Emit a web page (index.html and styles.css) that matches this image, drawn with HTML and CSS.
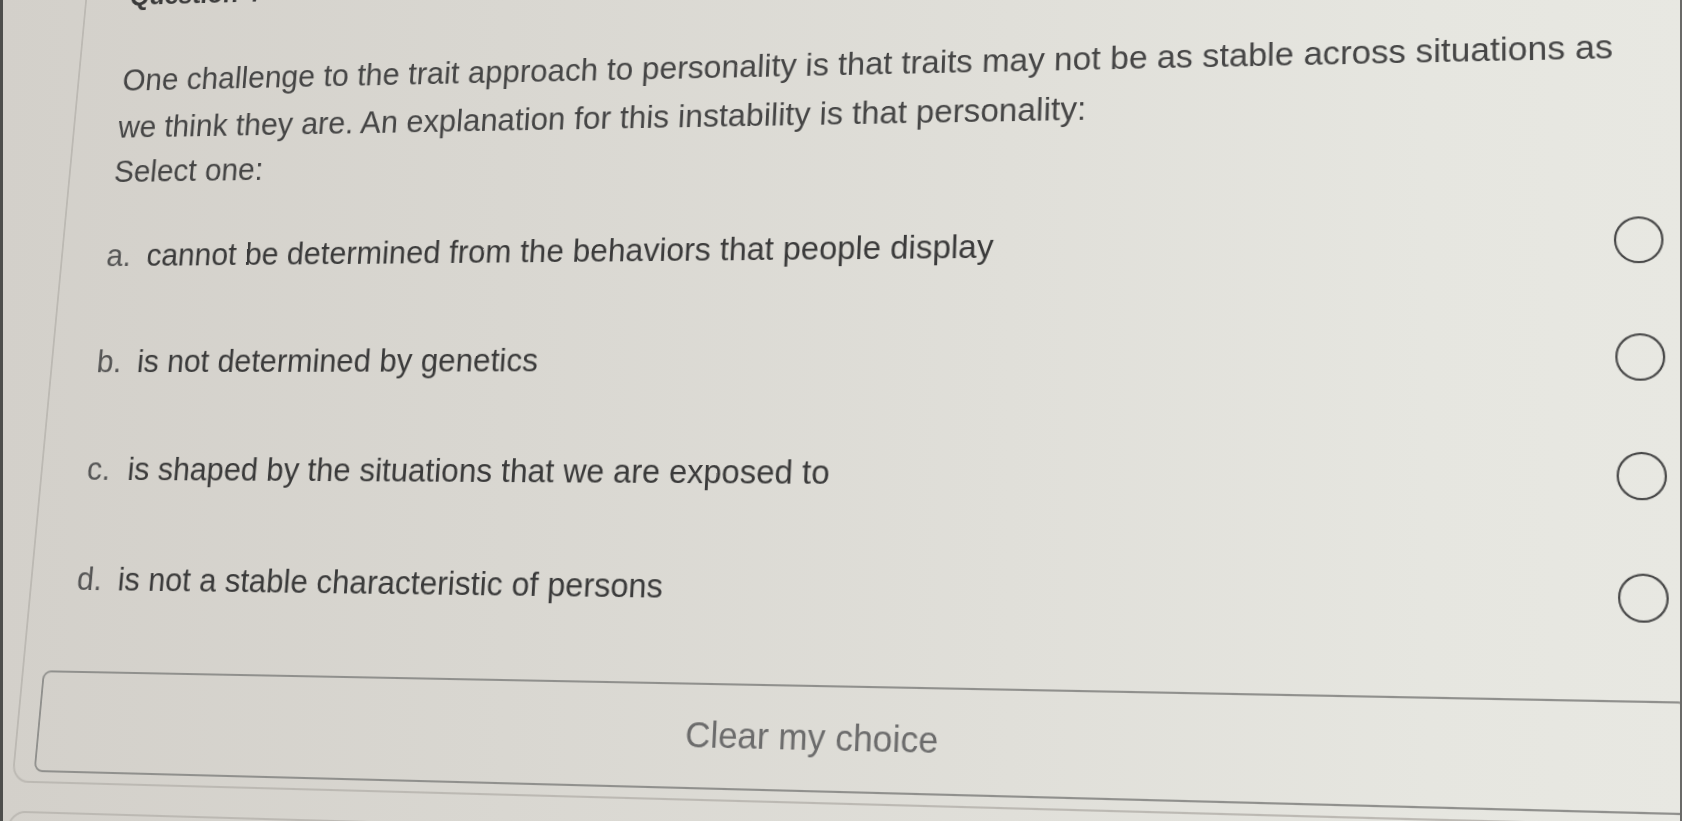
FILE: index.html
```html
<!DOCTYPE html>
<html lang="en">
<head>
<meta charset="utf-8">
<title>Question</title>
<link rel="stylesheet" href="styles.css">
</head>
<body>
<div class="bezel bezel-left"></div>
<div class="bezel bezel-right"></div>
<main class="screen">
  <section class="card">
    <h2 class="qno">Question 4</h2>
    <div class="qtext">One challenge to the trait approach to personality is that traits may not be as stable across situations as we think they are. An explanation for this instability is that personality:</div>
    <div class="prompt">Select one:</div>
    <div class="answers">
      <label class="opt"><span class="num">a.</span><span class="txt">cannot be determined from the behaviors that people display</span><span class="radio"></span></label>
      <label class="opt"><span class="num">b.</span><span class="txt">is not determined by genetics</span><span class="radio"></span></label>
      <label class="opt"><span class="num">c.</span><span class="txt">is shaped by the situations that we are exposed to</span><span class="radio"></span></label>
      <label class="opt"><span class="num">d.</span><span class="txt">is not a stable characteristic of persons</span><span class="radio"></span></label>
    </div>
    <button class="clear" type="button">Clear my choice</button>
  </section>
  <section class="card card-next"></section>
</main>
</body>
</html>
```
FILE: styles.css
```css
html, body {
  margin: 0;
  padding: 0;
}

body {
  width: 1682px;
  height: 821px;
  overflow: hidden;
  background: linear-gradient(90deg, #d3d0ca 0%, #d9d7d1 30%, #e0dfd9 60%, #e6e6e0 85%, #e8e8e2 100%);
  font-family: "Liberation Sans", Arial, sans-serif;
  color: #3d3d3d;
}

.bezel {
  position: fixed;
  top: 0;
  bottom: 0;
  z-index: 5;
  background: #4e4e4c;
}

.bezel-left {
  left: 0;
  width: 3px;
}

.bezel-right {
  right: 0;
  width: 2px;
  background: #6a6a68;
}

/* flat screen, projected to match the camera angle of the photo */
.screen {
  display: flow-root;
  width: 1800px;
  height: 900px;
  transform-origin: 0 0;
  transform: matrix3d(0.870695, -0.024741, 0, -0.0000617059,
                      -0.090412, 0.901476, 0, -0.0000624910,
                      0, 0, 1, 0,
                      40.3868, 21.9080, 0, 1);
}

.card {
  box-sizing: border-box;
  width: 1647px;
  margin: -80px 0 0 49px;
  padding: 33.3px 30px 9px 49px;
  border: 2px solid #bcb9b3;
  border-radius: 18px;
}

.qno {
  margin: 0 0 45.45px 0;
  font-size: 28px;
  line-height: 40px;
  font-weight: bold;
  color: #3a3a3a;
}

.qtext {
  max-width: 1540px;
  font-size: 33.2px;
  line-height: 51px;
  color: #454545;
}

.prompt {
  font-size: 33px;
  line-height: 45px;
  color: #454545;
}

.answers {
  margin-top: 11.5px;
}

.opt {
  display: flex;
  align-items: center;
  height: 112.3px;
  font-size: 33px;
  line-height: 45px;
  color: #3a3a3a;
}

.num {
  flex: none;
  width: 44.4px;
  color: #555;
}

.txt {
  flex: 1;
}

.radio {
  flex: none;
  box-sizing: border-box;
  width: 45px;
  height: 45px;
  border: 2px solid #474747;
  border-radius: 50%;
}

.clear {
  display: block;
  box-sizing: border-box;
  width: calc(100% + 44px);
  height: 101.5px;
  margin: 37.8px 0 0 -28px;
  padding: 0 15px 0 0;
  border: 2px solid #90908d;
  border-radius: 9px;
  background: transparent;
  font-family: "Liberation Sans", Arial, sans-serif;
  font-size: 34.5px;
  color: #6b6b6b;
  text-align: center;
  -webkit-appearance: none;
  appearance: none;
}

.card-next {
  height: 120px;
  margin-top: 28px;
  padding: 0;
}
```
